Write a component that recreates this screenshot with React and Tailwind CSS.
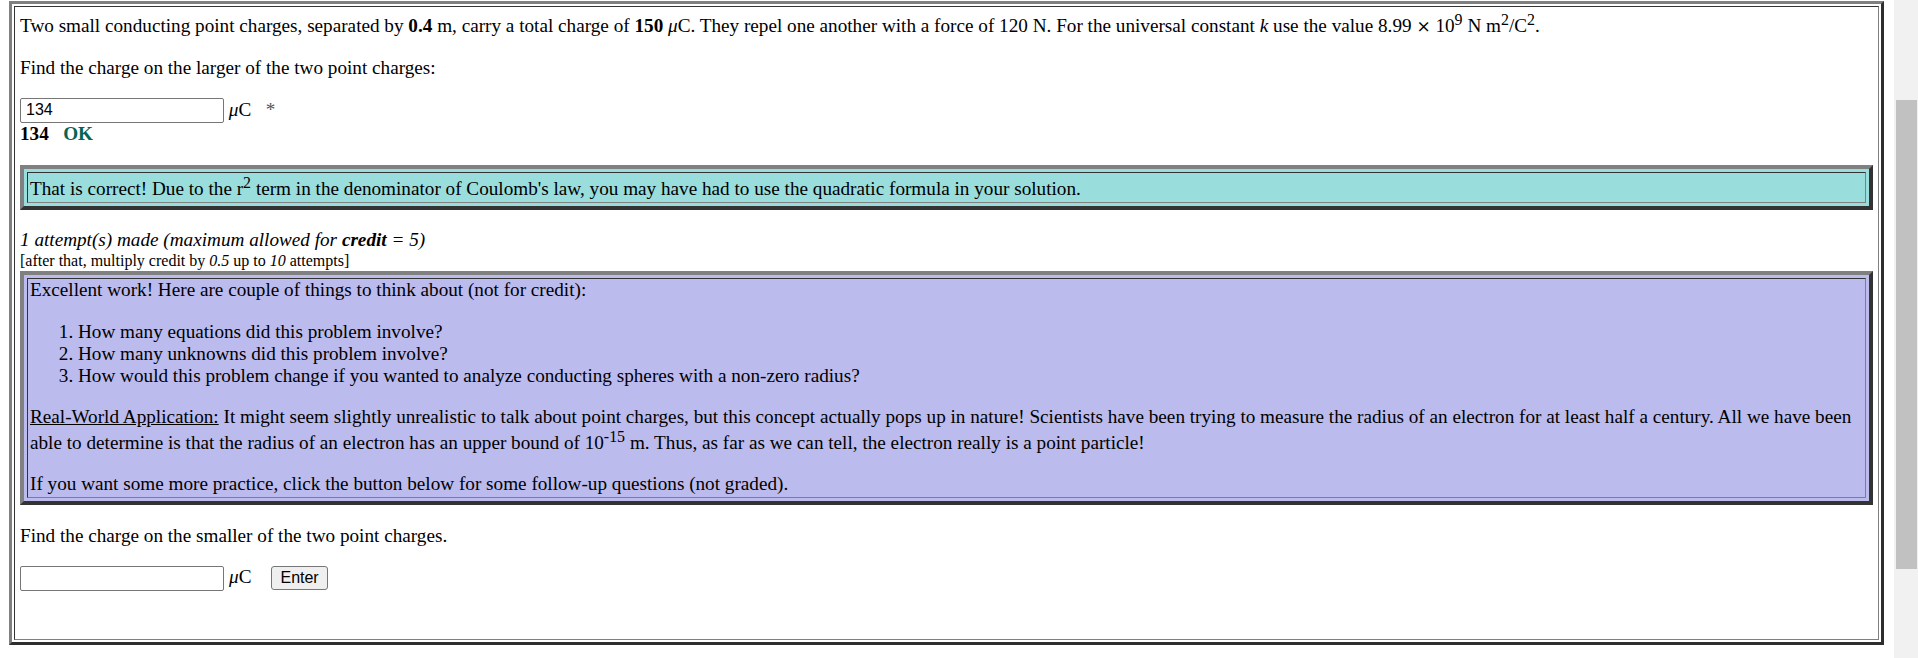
import React from 'react';

const sup = 'relative top-0 align-super text-[0.83em] leading-[normal]';

function Box({ bg, children, className = '' }) {
  // old-school table look: outset outer border, inset cell border
  return (
    <div className={`border-[4px] border-t-[#808080] border-l-[#808080] border-b-[#333333] border-r-[#333333] p-[3px] ${bg} ${className}`}>
      <div className="border border-t-[#333333] border-l-[#333333] border-b-[#808080] border-r-[#808080] pl-[2px] pr-[2px]">
        {children}
      </div>
    </div>
  );
}

function AnswerInput({ value = '' }) {
  return (
    <input
      type="text"
      defaultValue={value}
      className="w-[204px] h-[25px] border border-[#767676] rounded-[2px] px-[5px] bg-white text-black text-[16px] font-['Liberation_Sans',Arial,sans-serif] align-baseline"
    />
  );
}

export default function App() {
  return (
    <div className="flex w-[1918px] h-[658px] overflow-hidden bg-white text-black font-['Liberation_Serif','Times_New_Roman',serif] text-[19.2px] leading-[normal]">
      <div className="flex-1 pl-[9px] pt-[1px]">
        <div className="w-[1875px] h-[644px] border-[3px] border-t-[#808080] border-l-[#808080] border-b-[#2e2e2e] border-r-[#2e2e2e] p-[2px]">
          <div className="h-full border border-t-[#333333] border-l-[#333333] border-b-[#808080] border-r-[#808080] px-[5px] pt-[4px]">
            <p>
              Two small conducting point charges, separated by <b>0.4</b> m, carry a total charge of <b>150</b>{' '}
              <i>μ</i>C. They repel one another with a force of 120 N. For the universal constant <i>k</i> use the value
              8.99 <span className="font-['DejaVu_Serif',serif] text-[17px]">×</span> 10<sup className={sup}>9</sup> N m
              <sup className={sup}>2</sup>/C<sup className={sup}>2</sup>.
            </p>

            <p className="mt-[19.2px]">Find the charge on the larger of the two point charges:</p>

            <div className="mt-[19.2px]">
              <AnswerInput value="134" /> <i>μ</i>C&nbsp;&nbsp;&nbsp;<span className="text-[#555555]">*</span>
              <br />
              <b>134&nbsp;&nbsp;&nbsp;<span className="text-[#006655]">OK</span></b>
            </div>

            <Box bg="bg-[#99dddd]" className="mt-[20px]">
              <div className="pt-[1px] h-[29px]">
                That is correct! Due to the r<sup className={sup}>2</sup> term in the denominator of Coulomb's law, you may
                have had to use the quadratic formula in your solution.
              </div>
            </Box>

            <div className="mt-[19.2px]">
              <i>
                1 attempt(s) made (maximum allowed for <b>credit</b> = 5)
              </i>
              <div className="text-[16px] leading-[20.5px]">
                [after that, multiply credit by <i>0.5</i> up to <i>10</i> attempts]
              </div>
            </div>

            <Box bg="bg-[#bbbbee]">
              <p>Excellent work! Here are couple of things to think about (not for credit):</p>
              <ol className="list-decimal pl-[48px] mt-[19.2px]">
                <li>How many equations did this problem involve?</li>
                <li>How many unknowns did this problem involve?</li>
                <li>How would this problem change if you wanted to analyze conducting spheres with a non-zero radius?</li>
              </ol>
              <p className="mt-[19.2px]">
                <u>Real-World Application:</u> It might seem slightly unrealistic to talk about point charges, but this
                concept actually pops up in nature! Scientists have been trying to measure the radius of an electron for
                at least half a century. All we have been able to determine is that the radius of an electron has an
                upper bound of 10<sup className={sup}>-15</sup> m. Thus, as far as we can tell, the electron really is a
                point particle!
              </p>
              <p className="mt-[19.2px] pb-[2px]">
                If you want some more practice, click the button below for some follow-up questions (not graded).
              </p>
            </Box>

            <p className="mt-[19.2px]">Find the charge on the smaller of the two point charges.</p>

            <div className="mt-[19.2px] flex items-baseline">
              <AnswerInput />
              <span className="ml-[5px]">
                <i>μ</i>C
              </span>
              <button
                type="button"
                className="ml-[20px] h-[24px] px-[8px] border border-[#767676] rounded-[3px] bg-[#efefef] text-[16px] font-['Liberation_Sans',Arial,sans-serif] text-black"
              >
                Enter
              </button>
            </div>
          </div>
        </div>
      </div>

      {/* fake browser scrollbar */}
      <div className="w-[24px] h-full bg-[#f1f1f1] pl-[2px] pr-[1px] pt-[100px]">
        <div className="h-[469px] bg-[#c1c1c1]" />
      </div>
    </div>
  );
}
